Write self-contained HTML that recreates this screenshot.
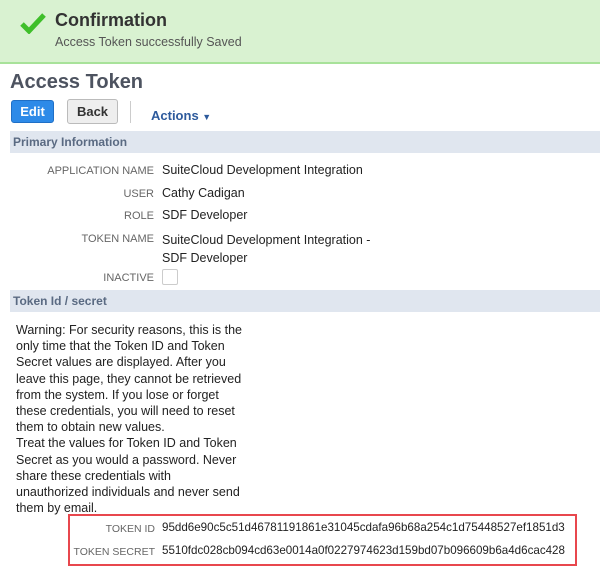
<!DOCTYPE html>
<html><head><style>
body{margin:0;width:600px;height:580px;background:#fff;font-family:"Liberation Sans",sans-serif;position:relative;overflow:hidden;color:#333}
.a{position:absolute;white-space:nowrap}
.lbl{position:absolute;right:446px;font-size:11px;color:#666;text-align:right;white-space:nowrap}
.val{position:absolute;left:162px;font-size:12.5px;color:#222;white-space:nowrap}
.sec{position:absolute;left:10px;width:590px;height:22px;background:#e0e6ef;font-size:12px;font-weight:bold;color:#5a6a82;line-height:22px;padding-left:3px;box-sizing:border-box}
</style></head><body>
<div class="a" style="left:0;top:0;width:600px;height:62px;background:#d9f2d1;border-bottom:2px solid #a8e29a"></div>
<svg class="a" style="left:20px;top:12px" width="26" height="22" viewBox="0 0 26 22"><path d="M2 12 L9 19 L24 3" stroke="#3fbf2a" stroke-width="5" fill="none"/></svg>
<div class="a" style="left:55px;top:10px;font-size:18px;font-weight:bold;color:#333">Confirmation</div>
<div class="a" style="left:55px;top:35px;font-size:12.5px;color:#555">Access Token successfully Saved</div>
<div class="a" style="left:10px;top:71px;font-size:20px;font-weight:bold;color:#4d5360">Access Token</div>
<div class="a" style="left:11px;top:100px;width:43px;height:23px;background:#2d8ae8;border:1px solid #1f6fc6;border-radius:3px;color:#fff;font-size:13px;font-weight:bold;text-align:center;line-height:21px;box-sizing:border-box">Edit</div>
<div class="a" style="left:67px;top:99px;width:51px;height:25px;background:#eee;border:1px solid #bbb;border-radius:3px;color:#333;font-size:13px;font-weight:bold;text-align:center;line-height:23px;box-sizing:border-box">Back</div>
<div class="a" style="left:130px;top:101px;width:1px;height:22px;background:#ccc"></div>
<div class="a" style="left:151px;top:108px;font-size:13px;font-weight:bold;color:#2d5a9c">Actions <span style="font-size:9px">▼</span></div>
<div class="sec" style="top:131px">Primary Information</div>
<div class="lbl" style="top:165px">APPLICATION NAME</div><div class="val" style="top:163px">SuiteCloud Development Integration</div>
<div class="lbl" style="top:188px">USER</div><div class="val" style="top:186px">Cathy Cadigan</div>
<div class="lbl" style="top:210px">ROLE</div><div class="val" style="top:208px">SDF Developer</div>
<div class="lbl" style="top:233px">TOKEN NAME</div><div class="val" style="top:231px;line-height:18px">SuiteCloud Development Integration -<br>SDF Developer</div>
<div class="lbl" style="top:272px">INACTIVE</div>
<div class="a" style="left:162px;top:269px;width:14px;height:14px;border:1px solid #ccc;border-radius:2px"></div>
<div class="sec" style="top:290px">Token Id / secret</div>
<div class="a" style="left:16px;top:322px;font-size:12.5px;line-height:16.2px;color:#222">Warning: For security reasons, this is the<br>only time that the Token ID and Token<br>Secret values are displayed. After you<br>leave this page, they cannot be retrieved<br>from the system. If you lose or forget<br>these credentials, you will need to reset<br>them to obtain new values.<br>Treat the values for Token ID and Token<br>Secret as you would a password. Never<br>share these credentials with<br>unauthorized individuals and never send<br>them by email.</div>
<div class="a" style="left:68px;top:514px;width:509px;height:52px;border:2px solid #e8474d;box-sizing:border-box"></div>
<div class="lbl" style="top:523px;right:445px;font-size:10.5px">TOKEN ID</div><div class="val" style="top:521px;font-size:11.6px">95dd6e90c5c51d46781191861e31045cdafa96b68a254c1d75448527ef1851d3</div>
<div class="lbl" style="top:546px;right:445px;font-size:10.5px">TOKEN SECRET</div><div class="val" style="top:544px;font-size:11.6px">5510fdc028cb094cd63e0014a0f0227974623d159bd07b096609b6a4d6cac428</div>
</body></html>
